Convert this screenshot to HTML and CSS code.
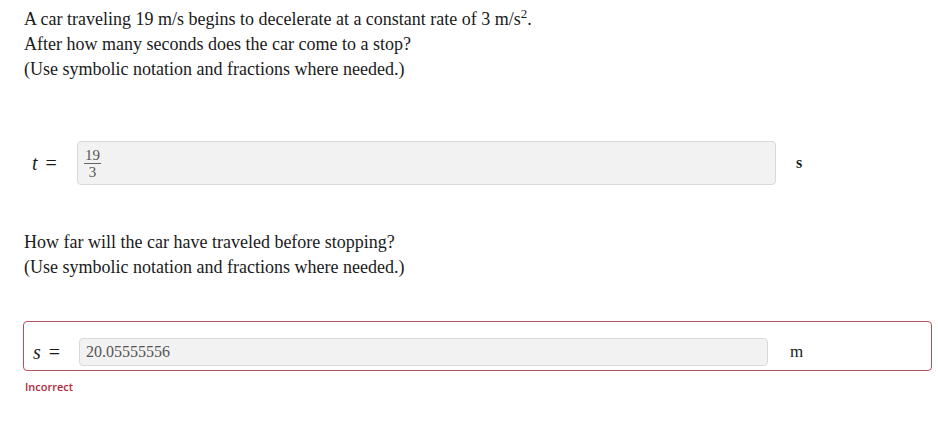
FILE: index.html
```html
<!DOCTYPE html>
<html>
<head>
<meta charset="utf-8">
<link rel="stylesheet" href="styles.css">
</head>
<body>
<div class="page">
  <div class="question q1">
    <div>A car traveling 19 m/s begins to decelerate at a constant rate of 3 m/s<sup>2</sup>.</div>
    <div>After how many seconds does the car come to a stop?</div>
    <div>(Use symbolic notation and fractions where needed.)</div>
  </div>

  <div class="answer-row row1">
    <div class="label"><span class="var">t</span><span class="eq">=</span></div>
    <div class="field">
      <span class="frac"><span class="num">19</span><span class="den">3</span></span>
    </div>
    <div class="unit unit-s">s</div>
  </div>

  <div class="question q2">
    <div>How far will the car have traveled before stopping?</div>
    <div>(Use symbolic notation and fractions where needed.)</div>
  </div>

  <div class="answer-row row2">
    <div class="label"><span class="var">s</span><span class="eq">=</span></div>
    <div class="field field2">20.05555556</div>
    <div class="unit unit-m">m</div>
  </div>
  <div class="feedback">Incorrect</div>
</div>
</body>
</html>
```

FILE: styles.css
```css
html, body {
  margin: 0;
  padding: 0;
  background: #ffffff;
}
body {
  font-family: "Liberation Serif", "Times New Roman", serif;
  font-size: 18px;
  color: #1a1a1a;
}
.page {
  padding: 7px 0 0 24px;
}
.question {
  line-height: 25px;
}
.question sup {
  font-size: 13px;
  line-height: 0;
  vertical-align: 7px;
}
.answer-row {
  display: grid;
  align-items: center;
}
.row1 {
  margin-top: 59px;
  grid-template-columns: 53px 699px auto;
}
.label {
  display: flex;
  align-items: center;
  font-family: "Liberation Serif", "Times New Roman", serif;
  font-size: 20px;
  line-height: 20px;
  padding-left: 8px;
}
.label .var {
  font-style: italic;
}
.label .eq {
  margin-left: 8px;
}
.field {
  box-sizing: border-box;
  background: #f2f2f2;
  border: 1px solid #d9d9d9;
  border-radius: 4px;
  color: #555555;
  font-family: "Liberation Serif", "Times New Roman", serif;
}
.row1 .field {
  height: 44px;
  padding: 5px 6px;
  display: flex;
  align-items: center;
}
.frac {
  display: inline-flex;
  flex-direction: column;
  align-items: center;
  font-family: "Liberation Serif", "Times New Roman", serif;
  font-size: 15px;
  line-height: 12px;
}
.frac .num {
  border-bottom: 1px solid #666;
  padding: 0 1px 2px;
}
.frac .den {
  padding-top: 2px;
}
.unit {
  font-size: 17px;
  line-height: 20px;
}
.unit-s {
  padding-left: 20px;
  font-weight: bold;
  font-size: 16px;
}
.q2 {
  margin-top: 45px;
}
.row2 {
  margin-top: 41px;
  margin-left: -1px;
  width: 909px;
  box-sizing: border-box;
  border: 1px solid #b9505f;
  border-radius: 4px;
  padding: 16px 10px 4px 9px;
  grid-template-columns: 46px 689px auto;
}
.row2 .label {
  padding-left: 0;
}
.field2 {
  height: 28px;
  padding: 0 6px;
  display: flex;
  align-items: center;
  font-size: 16px;
}
.unit-m {
  padding-left: 22px;
}
.feedback {
  margin-top: 8px;
  padding-left: 1px;
  font-family: "Open Sans", "Liberation Sans", sans-serif;
  font-weight: 600;
  font-size: 11px;
  color: #b5283c;
}
```
